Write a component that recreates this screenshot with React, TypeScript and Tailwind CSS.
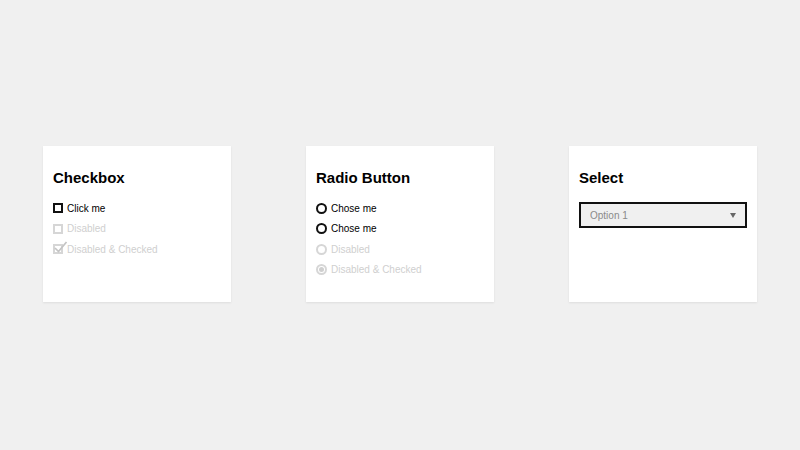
const font = { fontFamily: '"Liberation Sans", Arial, sans-serif' };

function Card({ title, children }: { title: string; children: React.ReactNode }) {
  return (
    <div className="h-[156px] w-[188px] bg-white px-[10px] pt-[10px] shadow-[0_1px_2px_rgba(0,0,0,0.08)]">
      <h3 className="mt-[13px] mb-[11px] text-[15px] leading-[18px] font-bold text-black">{title}</h3>
      {children}
    </div>
  );
}

function Row({ children, disabled }: { children: React.ReactNode; disabled?: boolean }) {
  return (
    <div
      className={`flex h-[20.5px] items-center gap-[4px] text-[10px] ${
        disabled ? "text-[#cfcfcf]" : "text-black"
      }`}
    >
      {children}
    </div>
  );
}

function Box({ disabled, checked }: { disabled?: boolean; checked?: boolean }) {
  return (
    <span
      className={`relative inline-block h-[10px] w-[10px] shrink-0 border-2 ${
        disabled ? "border-[#d6d6d6]" : "border-[#111]"
      }`}
    >
      {checked && (
        <svg
          className="absolute -top-[8px] -left-[2px]"
          width="16"
          height="16"
          viewBox="0 0 16 16"
          fill="none"
        >
          <path d="M2 10 L5.5 13.5 L13.5 4" stroke="#c4c4c4" strokeWidth="1.7" />
        </svg>
      )}
    </span>
  );
}

function Radio({ disabled, checked }: { disabled?: boolean; checked?: boolean }) {
  return (
    <span
      className={`flex h-[11px] w-[11px] shrink-0 items-center justify-center rounded-full border-2 ${
        disabled ? "border-[#d6d6d6]" : "border-[#111]"
      }`}
    >
      {checked && <span className="h-[5px] w-[5px] rounded-full bg-[#cfcfcf]" />}
    </span>
  );
}

export default function App() {
  return (
    <div style={font} className="flex min-h-screen w-full gap-[75px] bg-[#f0f0f0] pt-[146px] pl-[43px]">
      <Card title="Checkbox">
        <Row>
          <Box />
          <span>Click me</span>
        </Row>
        <Row disabled>
          <Box disabled />
          <span>Disabled</span>
        </Row>
        <Row disabled>
          <Box disabled checked />
          <span>Disabled &amp; Checked</span>
        </Row>
      </Card>
      <Card title="Radio Button">
        <Row>
          <Radio />
          <span>Chose me</span>
        </Row>
        <Row>
          <Radio />
          <span>Chose me</span>
        </Row>
        <Row disabled>
          <Radio disabled />
          <span>Disabled</span>
        </Row>
        <Row disabled>
          <Radio disabled checked />
          <span>Disabled &amp; Checked</span>
        </Row>
      </Card>
      <Card title="Select">
        <div className="mt-[15px] flex h-[26px] items-center justify-between border-2 border-[#111] bg-[#f0f0f0] pr-[9px] pl-[9px] text-[10px] text-[#8a8a8a]">
          <span>Option 1</span>
          <svg width="6" height="5" viewBox="0 0 6 5">
            <path d="M0 0 H6 L3 5 Z" fill="#666" />
          </svg>
        </div>
      </Card>
    </div>
  );
}
